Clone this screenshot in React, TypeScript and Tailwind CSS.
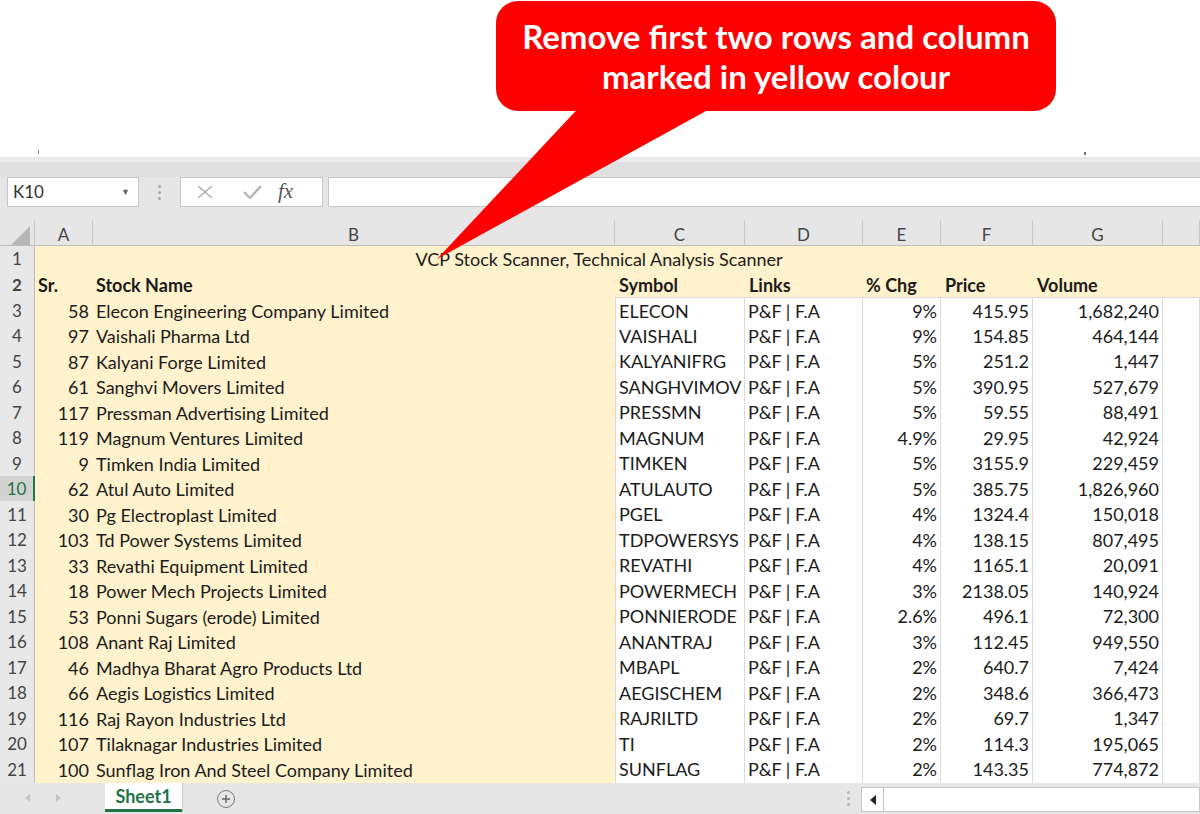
import React from "react";

type Row = {
  sr: number;
  name: string;
  symbol: string;
  chg: string;
  price: string;
  volume: string;
};

const rows: Row[] = [
  { sr: 58, name: "Elecon Engineering Company Limited", symbol: "ELECON", chg: "9%", price: "415.95", volume: "1,682,240" },
  { sr: 97, name: "Vaishali Pharma Ltd", symbol: "VAISHALI", chg: "9%", price: "154.85", volume: "464,144" },
  { sr: 87, name: "Kalyani Forge Limited", symbol: "KALYANIFRG", chg: "5%", price: "251.2", volume: "1,447" },
  { sr: 61, name: "Sanghvi Movers Limited", symbol: "SANGHVIMOV", chg: "5%", price: "390.95", volume: "527,679" },
  { sr: 117, name: "Pressman Advertising Limited", symbol: "PRESSMN", chg: "5%", price: "59.55", volume: "88,491" },
  { sr: 119, name: "Magnum Ventures Limited", symbol: "MAGNUM", chg: "4.9%", price: "29.95", volume: "42,924" },
  { sr: 9, name: "Timken India Limited", symbol: "TIMKEN", chg: "5%", price: "3155.9", volume: "229,459" },
  { sr: 62, name: "Atul Auto Limited", symbol: "ATULAUTO", chg: "5%", price: "385.75", volume: "1,826,960" },
  { sr: 30, name: "Pg Electroplast Limited", symbol: "PGEL", chg: "4%", price: "1324.4", volume: "150,018" },
  { sr: 103, name: "Td Power Systems Limited", symbol: "TDPOWERSYS", chg: "4%", price: "138.15", volume: "807,495" },
  { sr: 33, name: "Revathi Equipment Limited", symbol: "REVATHI", chg: "4%", price: "1165.1", volume: "20,091" },
  { sr: 18, name: "Power Mech Projects Limited", symbol: "POWERMECH", chg: "3%", price: "2138.05", volume: "140,924" },
  { sr: 53, name: "Ponni Sugars (erode) Limited", symbol: "PONNIERODE", chg: "2.6%", price: "496.1", volume: "72,300" },
  { sr: 108, name: "Anant Raj Limited", symbol: "ANANTRAJ", chg: "3%", price: "112.45", volume: "949,550" },
  { sr: 46, name: "Madhya Bharat Agro Products Ltd", symbol: "MBAPL", chg: "2%", price: "640.7", volume: "7,424" },
  { sr: 66, name: "Aegis Logistics Limited", symbol: "AEGISCHEM", chg: "2%", price: "348.6", volume: "366,473" },
  { sr: 116, name: "Raj Rayon Industries Ltd", symbol: "RAJRILTD", chg: "2%", price: "69.7", volume: "1,347" },
  { sr: 107, name: "Tilaknagar Industries Limited", symbol: "TI", chg: "2%", price: "114.3", volume: "195,065" },
  { sr: 100, name: "Sunflag Iron And Steel Company Limited", symbol: "SUNFLAG", chg: "2%", price: "143.35", volume: "774,872" },
];

const cols = "grid grid-cols-[35px_58px_522px_130px_118px_78px_92px_130px_1fr]";
const rowH = "h-[25.5px]";
const font = { fontFamily: "Lato, 'Noto Sans', sans-serif" };

function RowHead({ n, active }: { n?: number; active?: boolean }) {
  return (
    <div
      className={
        "flex items-center justify-center border-b border-[#d4d4d4] text-[17px] " +
        (active
          ? "bg-[#d2d2d2] text-[#217346] border-r-2 border-r-[#217346]"
          : "bg-[#e8e8e8] text-[#444] border-r border-r-[#bcbcbc]")
      }
    >
      {n}
    </div>
  );
}

const yellow = "bg-[#fff2cc]";
const white = "bg-white border-r border-b border-[#dadada]";

export default function App() {
  return (
    <div className="relative w-[1200px] h-[814px] overflow-hidden bg-white text-[#1b1b1b]" style={font}>
      {/* white ribbon area */}
      <div className="h-[157px] bg-white relative">
        <span className="absolute left-[38px] top-[150px] h-[4px] w-[1px] bg-[#777]" />
        <span className="absolute left-[1084px] top-[152px] h-[3px] w-[2px] bg-[#777]" />
      </div>

      {/* ribbon bottom edge */}
      <div className="h-[20px] bg-[#e0e0e0] border-t-[5px] border-[#eaeaea]" />

      {/* formula bar */}
      <div className="h-[30px] bg-[#e6e6e6] flex items-stretch relative">
        <div className="ml-[7px] w-[132px] bg-white border border-[#c6c6c6] flex items-center justify-between pl-[5px] pr-[8px]">
          <span className="text-[17px] text-[#333]">K10</span>
          <span className="text-[9px] text-[#666]">▼</span>
        </div>
        <div className="w-[41px] flex flex-col items-center justify-center gap-[3px]">
          <span className="w-[3px] h-[3px] rounded-full bg-[#a5a5a5]" />
          <span className="w-[3px] h-[3px] rounded-full bg-[#a5a5a5]" />
          <span className="w-[3px] h-[3px] rounded-full bg-[#a5a5a5]" />
        </div>
        <div className="w-[143px] bg-white border border-[#c6c6c6] flex items-center">
          <svg width="48" height="20" viewBox="0 0 48 20">
            <path d="M17 4 L31 16 M31 4 L17 16" stroke="#b0b0b0" strokeWidth="1.6" fill="none" />
          </svg>
          <svg width="46" height="20" viewBox="0 0 46 20">
            <path d="M15 10 L21 16 L32 4" stroke="#b0b0b0" strokeWidth="2.2" fill="none" />
          </svg>
          <span
            className="ml-[3px] text-[21px] italic text-[#555]"
            style={{ fontFamily: "'Liberation Serif', 'DejaVu Serif', serif" }}
          >
            fx
          </span>
        </div>
        <div className="ml-[5px] flex-1 bg-white border-l border-y border-[#c6c6c6]" />
      </div>

      {/* spacer above column headers */}
      <div className="h-[13px] bg-[#e6e6e6]" />

      {/* column headers */}
      <div className={cols + " h-[26px] bg-[#e6e6e6] border-b border-[#bcbcbc] text-[17px] text-[#444]"}>
        <div className="relative border-r border-[#c8c8c8]">
          <svg width="22" height="22" viewBox="0 0 22 22" className="absolute right-[3px] bottom-[2px]">
            <polygon points="21,2 21,21 2,21" fill="#b7b7b7" />
          </svg>
        </div>
        {["A", "B", "C", "D", "E", "F", "G", ""].map((c, i) => (
          <div key={i} className="flex items-center justify-center border-r border-[#c8c8c8] pt-[2px]">
            {c}
          </div>
        ))}
      </div>

      {/* sheet body */}
      <div className="h-[537px] overflow-hidden text-[18px]">
        {/* row 1: merged title */}
        <div className={cols + " " + rowH}>
          <RowHead n={1} />
          <div className={"col-span-7 flex items-center justify-center " + yellow}>
            VCP Stock Scanner, Technical Analysis Scanner
          </div>
          <div className={yellow} />
        </div>

        {/* row 2: headings */}
        <div className={cols + " " + rowH + " font-bold"}>
          <RowHead n={2} />
          <div className={yellow + " flex items-center pl-[3px]"}>Sr.</div>
          <div className={yellow + " flex items-center pl-[3px]"}>Stock Name</div>
          <div className={yellow + " flex items-center pl-[4px]"}>Symbol</div>
          <div className={yellow + " flex items-center pl-[4px]"}>Links</div>
          <div className={yellow + " flex items-center pl-[3px]"}>% Chg</div>
          <div className={yellow + " flex items-center pl-[4px]"}>Price</div>
          <div className={yellow + " flex items-center pl-[4px]"}>Volume</div>
          <div className={yellow} />
        </div>

        {rows.map((r, i) => {
          const first = i === 0 ? " border-t" : "";
          return (
            <div key={r.symbol} className={cols + " " + rowH}>
              <RowHead n={i + 3} active={i + 3 === 10} />
              <div className={yellow + " flex items-center justify-end pr-[4px]"}>{r.sr}</div>
              <div className={yellow + " flex items-center pl-[3px] whitespace-nowrap"}>{r.name}</div>
              <div className={white + first + " border-l flex items-center pl-[3px] whitespace-nowrap overflow-hidden"}>{r.symbol}</div>
              <div className={white + first + " flex items-center pl-[3px]"}>P&amp;F | F.A</div>
              <div className={white + first + " flex items-center justify-end pr-[3px]"}>{r.chg}</div>
              <div className={white + first + " flex items-center justify-end pr-[3px]"}>{r.price}</div>
              <div className={white + first + " flex items-center justify-end pr-[3px]"}>{r.volume}</div>
              <div className={white + first} />
            </div>
          );
        })}

        {/* sliver of the next row under the tab bar */}
        <div className={cols + " " + rowH}>
          <RowHead />
          <div className={yellow} />
          <div className={yellow} />
          <div className={white + " border-l"} />
          <div className={white} />
          <div className={white} />
          <div className={white} />
          <div className={white} />
          <div className={white} />
        </div>
      </div>

      {/* sheet tabs and horizontal scroll */}
      <div className="h-[31px] bg-[#e6e6e6] flex items-start">
        <div className="w-[105px] h-[29px] flex items-center">
          <svg width="8" height="10" viewBox="0 0 8 10" className="ml-[24px]">
            <polygon points="6,1 6,9 1,5" fill="#c4c4c4" />
          </svg>
          <svg width="8" height="10" viewBox="0 0 8 10" className="ml-[22px]">
            <polygon points="2,1 2,9 7,5" fill="#c4c4c4" />
          </svg>
        </div>
        <div className="w-[77px] h-[29px] bg-white border-b-[3px] border-[#217346] flex items-center justify-center text-[#217346] font-bold text-[18px] shadow-[1px_0_0_#c6c6c6]">
          Sheet1
        </div>
        <div className="ml-[35px] mt-[7px] w-[18px] h-[18px] rounded-full border-[1.5px] border-[#7a7a7a] flex items-center justify-center">
          <svg width="10" height="10" viewBox="0 0 10 10">
            <path d="M5 1 V9 M1 5 H9" stroke="#666" strokeWidth="1.4" />
          </svg>
        </div>
        <div className="ml-[609px] mt-[8px] flex flex-col gap-[3px] items-center w-[8px]">
          <span className="w-[3px] h-[3px] rounded-full bg-[#b5b5b5]" />
          <span className="w-[3px] h-[3px] rounded-full bg-[#b5b5b5]" />
          <span className="w-[3px] h-[3px] rounded-full bg-[#b5b5b5]" />
        </div>
        <div className="ml-[9px] mt-[4px] flex-1 h-[25px] bg-white border border-[#c6c6c6] flex">
          <div className="w-[22px] border-r border-[#c6c6c6] flex items-center justify-center">
            <svg width="8" height="10" viewBox="0 0 8 10">
              <polygon points="7,0 7,10 1,5" fill="#222" />
            </svg>
          </div>
        </div>
      </div>

      {/* callout */}
      <svg width="1200" height="814" viewBox="0 0 1200 814" className="absolute inset-0 pointer-events-none">
        <polygon points="586,100 726,100 437,259" fill="#ff0000" />
      </svg>
      <div className="absolute left-[496px] top-[1px] w-[560px] h-[110px] rounded-[22px] bg-[#ff0000] flex flex-col items-center justify-center text-white font-bold text-[33px] leading-[40px]">
        <span>Remove first two rows and column</span>
        <span>marked in yellow colour</span>
      </div>
    </div>
  );
}
